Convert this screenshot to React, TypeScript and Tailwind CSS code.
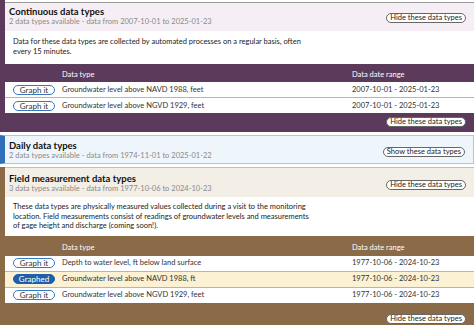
import type { ReactNode } from "react";

type Row = { type: string; range: string; graphed?: boolean };

function PillButton({ children, graphed }: { children: ReactNode; graphed?: boolean }) {
  if (graphed) {
    return (
      <span className="flex h-[10px] w-[42px] items-center justify-center rounded-full border border-[#1f5fa8] bg-[#1f5fa8] text-[8px] leading-none text-white">
        {children}
      </span>
    );
  }
  return (
    <span className="flex h-[10px] w-[42px] items-center justify-center rounded-full border border-[#3a78bd] bg-white text-[8px] leading-none text-[#333]">
      {children}
    </span>
  );
}

function ToggleButton({ label }: { label: string }) {
  return (
    <span className="flex h-[10px] items-center rounded-full border border-[#666] bg-white px-[3px] text-[7.5px] leading-none text-[#222]">
      {label}
    </span>
  );
}

function Header({
  title,
  sub,
  button,
  className,
}: {
  title: string;
  sub: string;
  button: string;
  className: string;
}) {
  return (
    <div className={`flex items-end justify-between pl-[4px] pr-[8px] leading-none ${className}`}>
      <div className="flex flex-col">
        <span className="text-[9.5px] font-bold leading-[11px] text-[#111]">{title}</span>
        <span className="text-[7.5px] leading-[10px] text-[#8a8a8a]">{sub}</span>
      </div>
      <div className="flex pb-[4px]">
        <ToggleButton label={button} />
      </div>
    </div>
  );
}

function Table({ rows, headH }: { rows: Row[]; headH: string }) {
  return (
    <div>
      <div className={`flex items-end pb-[4px] text-[7.5px] leading-none text-white ${headH}`}>
        <span className="w-[57px] shrink-0" />
        <span className="w-[290px] shrink-0">Data type</span>
        <span>Data date range</span>
      </div>
      <div className="flex flex-col gap-[1px] bg-[#b5b5b5]">
        {rows.map((r, i) => (
          <div
            key={i}
            className={`flex h-[15px] items-center text-[7.5px] leading-none text-[#333] ${r.graphed ? "bg-[#fcf1d2]" : "bg-white"}`}
          >
            <span className="flex w-[57px] shrink-0 pl-[8px]">
              <PillButton graphed={r.graphed}>{r.graphed ? "Graphed" : "Graph it"}</PillButton>
            </span>
            <span className="w-[290px] shrink-0">{r.type}</span>
            <span>{r.range}</span>
          </div>
        ))}
      </div>
    </div>
  );
}

export default function App() {
  return (
    <div className="h-[325px] w-[474px] overflow-hidden bg-white font-['Lato',sans-serif] leading-none">
      {/* Continuous */}
      <section className="border-l-[5px] border-[#5b3a5c]">
        <div className="h-[2px] bg-white" />
        <Header
          title="Continuous data types"
          sub="2 data types available - data from 2007-10-01 to 2025-01-23"
          button="Hide these data types"
          className="border-t border-[#9a9a9a] bg-[#f5eff5] pt-[3px] pb-[4px]"
        />
        <div className="bg-white px-[8px] pt-[6px] pb-[7px] text-[7.5px] leading-[10px] text-[#222]">
          Data for these data types are collected by automated processes on a regular basis, often
          <br />
          every 15 minutes.
        </div>
        <div className="bg-[#5b3a5c]">
          <Table
            headH="h-[18px]"
            rows={[
              { type: "Groundwater level above NAVD 1988, feet", range: "2007-10-01 - 2025-01-23" },
              { type: "Groundwater level above NGVD 1929, feet", range: "2007-10-01 - 2025-01-23" },
            ]}
          />
          <div className="flex justify-end pt-[4px] pr-[8px] pb-[5px]">
            <ToggleButton label="Hide these data types" />
          </div>
        </div>
      </section>

      {/* Daily */}
      <section className="mt-[3px] border border-l-[5px] border-[#a9c7e6] border-l-[#2f6fb7]">
        <Header
          title="Daily data types"
          sub="2 data types available - data from 1974-11-01 to 2025-01-22"
          button="Show these data types"
          className="bg-[#eef5fb] pt-[4px] pb-[2px]"
        />
      </section>

      {/* Field measurement */}
      <section className="mt-[3px] border-l-[5px] border-[#8b6a48]">
        <Header
          title="Field measurement data types"
          sub="3 data types available - data from 1977-10-06 to 2024-10-23"
          button="Hide these data types"
          className="border-t border-[#cbbba8] bg-[#f3eee6] pt-[5px] pb-[3px]"
        />
        <div className="bg-white px-[8px] pt-[5px] pb-[5px] text-[7.5px] leading-[9.5px] text-[#222]">
          These data types are physically measured values collected during a visit to the monitoring
          <br />
          location. Field measurements consist of readings of groundwater levels and measurements
          <br />
          of gage height and discharge (coming soon!).
        </div>
        <div className="bg-[#8b6a48]">
          <Table
            headH="h-[20px]"
            rows={[
              { type: "Depth to water level, ft below land surface", range: "1977-10-06 - 2024-10-23" },
              { type: "Groundwater level above NAVD 1988, ft", range: "1977-10-06 - 2024-10-23", graphed: true },
              { type: "Groundwater level above NGVD 1929, feet", range: "1977-10-06 - 2024-10-23" },
            ]}
          />
          <div className="flex justify-end pt-[11px] pr-[8px] pb-[6px]">
            <ToggleButton label="Hide these data types" />
          </div>
        </div>
      </section>
    </div>
  );
}
